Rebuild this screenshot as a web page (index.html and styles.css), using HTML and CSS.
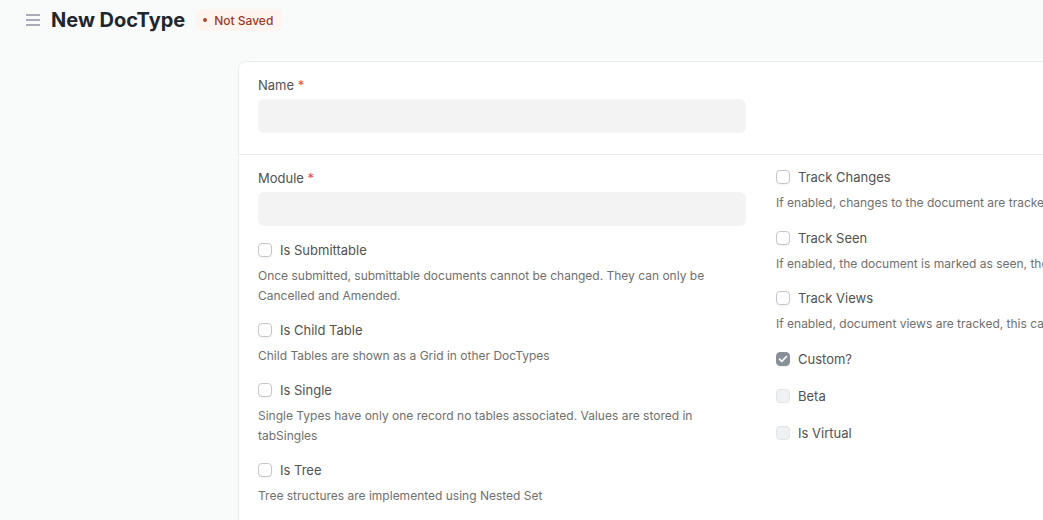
FILE: index.html
```html
<!DOCTYPE html>
<html>
<head>
<meta charset="utf-8">
<link rel="stylesheet" href="styles.css">
</head>
<body>
<div class="page">
  <header class="page-head">
    <span class="menu-icon">
      <svg width="16" height="14" viewBox="0 0 16 14"><path d="M1 2h14M1 7h14M1 12h14" stroke="#8e949c" stroke-width="1.5" fill="none"/></svg>
    </span>
    <h1 class="title">New DocType</h1>
    <span class="badge"><span class="dot"></span>Not Saved</span>
  </header>

  <main class="layout">
    <div class="sidebar"></div>
    <div class="card">
      <section class="section section-first">
        <div class="col col-left">
          <div class="control">
            <label class="field-label">Name <span class="req">*</span></label>
            <div class="input"></div>
          </div>
        </div>
      </section>
      <section class="section section-grid">
        <div class="col col-left">
          <div class="control">
            <label class="field-label">Module <span class="req">*</span></label>
            <div class="input"></div>
          </div>
          <div class="check">
            <div class="check-row"><span class="box"></span><span class="check-label">Is Submittable</span></div>
            <p class="help">Once submitted, submittable documents cannot be changed. They can only be Cancelled and Amended.</p>
          </div>
          <div class="check">
            <div class="check-row"><span class="box"></span><span class="check-label">Is Child Table</span></div>
            <p class="help">Child Tables are shown as a Grid in other DocTypes</p>
          </div>
          <div class="check">
            <div class="check-row"><span class="box"></span><span class="check-label">Is Single</span></div>
            <p class="help">Single Types have only one record no tables associated. Values are stored in tabSingles</p>
          </div>
          <div class="check">
            <div class="check-row"><span class="box"></span><span class="check-label">Is Tree</span></div>
            <p class="help">Tree structures are implemented using Nested Set</p>
          </div>
        </div>
        <div class="col col-right">
          <div class="check">
            <div class="check-row"><span class="box"></span><span class="check-label">Track Changes</span></div>
            <p class="help">If enabled, changes to the document are tracked and shown in timeline</p>
          </div>
          <div class="check">
            <div class="check-row"><span class="box"></span><span class="check-label">Track Seen</span></div>
            <p class="help">If enabled, the document is marked as seen, the first time a user opens it</p>
          </div>
          <div class="check">
            <div class="check-row"><span class="box"></span><span class="check-label">Track Views</span></div>
            <p class="help">If enabled, document views are tracked, this can happen multiple times</p>
          </div>
          <div class="check bare">
            <div class="check-row"><span class="box checked">
              <svg width="10" height="8" viewBox="0 0 10 8"><path d="M1.5 4.2l2.3 2.2 4.7-4.9" stroke="#fff" stroke-width="1.6" fill="none" stroke-linecap="round" stroke-linejoin="round"/></svg>
            </span><span class="check-label">Custom?</span></div>
          </div>
          <div class="check bare">
            <div class="check-row"><span class="box disabled"></span><span class="check-label">Beta</span></div>
          </div>
          <div class="check bare">
            <div class="check-row"><span class="box disabled"></span><span class="check-label">Is Virtual</span></div>
          </div>
        </div>
      </section>
    </div>
  </main>
</div>
</body>
</html>
```
FILE: styles.css
```css
* { box-sizing: border-box; }
html, body {
  margin: 0;
  padding: 0;
  width: 1043px;
  height: 520px;
  overflow: hidden;
  background: #f9fafa;
  font-family: "Inter", "Noto Sans", sans-serif;
  color: #383838;
}
.page {
  width: 1043px;
  height: 520px;
  overflow: hidden;
}
.page-head {
  display: flex;
  align-items: center;
  height: 40px;
  padding-left: 25px;
}
.menu-icon {
  display: flex;
  width: 16px;
  height: 14px;
  margin-right: 10px;
}
.title {
  margin: 0;
  font-size: 20px;
  font-weight: 700;
  color: #1f272e;
  line-height: 24px;
}
.badge {
  display: inline-flex;
  align-items: center;
  margin-left: 10px;
  height: 22px;
  padding: 0 9px 0 8px;
  border-radius: 6px;
  background: #fff4f0;
  color: #9a3a25;
  font-size: 12px;
  font-weight: 500;
}
.dot {
  width: 4px;
  height: 4px;
  border-radius: 50%;
  background: #b0462a;
  margin-right: 7px;
}
.layout {
  display: flex;
  margin-top: 21px;
}
.sidebar {
  width: 238px;
  flex: none;
}
.card {
  flex: none;
  width: 1070px;
  background: #fff;
  border: 1px solid #ececec;
  border-radius: 8px;
  height: 500px;
  overflow: hidden;
}
.section {
  padding: 13px 20px 21px 19px;
  border-bottom: 1px solid #ededed;
}
.section-grid {
  display: grid;
  grid-template-columns: 488px 1fr;
  column-gap: 30px;
  padding-top: 10px;
  border-bottom: none;
}
.col-left { width: 488px; }
.col-right { min-width: 0; }
.control {
  margin-bottom: 12px;
}
.section-first .control { margin-bottom: 0; }
.section-grid .control { padding-top: 3px; }
.field-label {
  display: block;
  font-size: 13px;
  line-height: 20px;
  color: #525252;
  margin-bottom: 4px;
}
.req { color: #e24c4c; }
.input {
  height: 34px;
  background: #f3f3f4;
  border-radius: 6px;
}
.check {
  margin-bottom: 12px;
}
.col-right .check {
  margin-bottom: 12.5px;
}
.col-right .check.bare {
  margin-bottom: 13px;
}
.check-row {
  display: flex;
  align-items: center;
  height: 24px;
}
.box {
  width: 14px;
  height: 14px;
  border: 1px solid #c4c8cd;
  border-radius: 4px;
  margin-right: 8px;
  display: flex;
  align-items: center;
  justify-content: center;
  background: #fff;
  box-shadow: 0 1px 2px rgba(0,0,0,0.06);
}
.box.checked {
  background: #8a9098;
  border-color: #8a9098;
}
.box.disabled {
  background: #f0f1f2;
  border-color: #e2e4e6;
  box-shadow: none;
}
.check-label {
  font-size: 13px;
  line-height: 20px;
  color: #525252;
}
.help {
  margin: 4px 0 0;
  font-size: 12px;
  line-height: 20px;
  color: #6f6f6f;
}
.col-right .help { white-space: nowrap; }
```
